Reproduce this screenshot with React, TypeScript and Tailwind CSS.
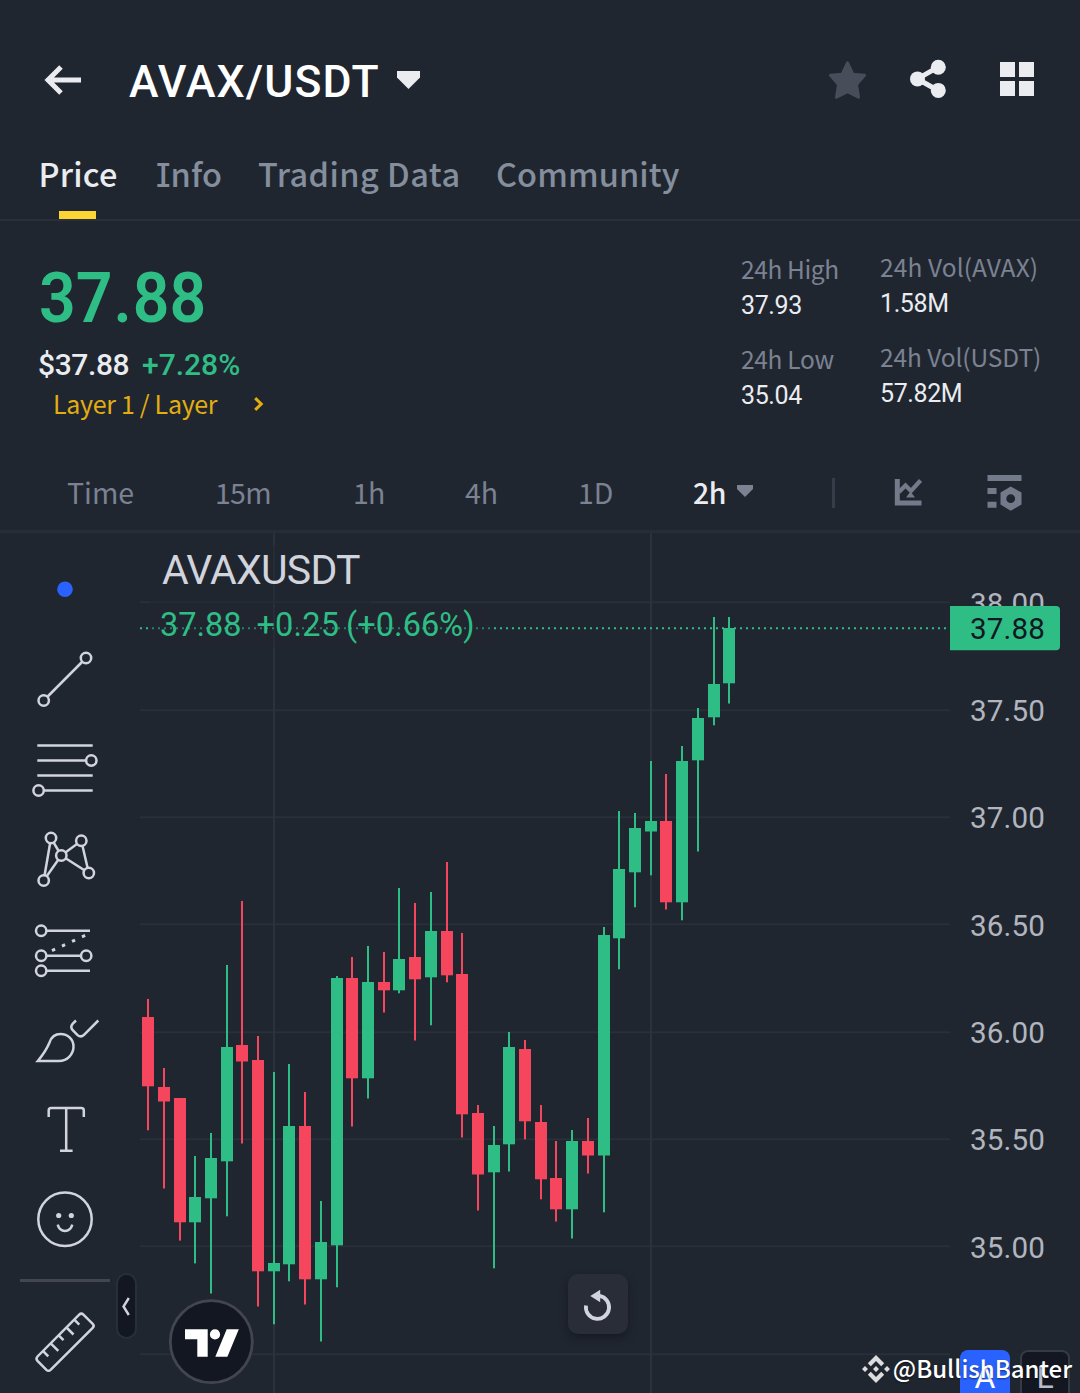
import React from "react";

const PLEX = "font-['Noto_Sans_CJK_SC','Noto_Sans',sans-serif]";
const ROBOTO = "font-[Roboto,sans-serif]";

type Candle = [x: number, open: number, close: number, high: number, low: number, up: 0 | 1];

/* x of the body's left edge, body top, body bottom, wick top, wick bottom, rising */
const CANDLES: Candle[] = [
  [142, 1017, 1086.3, 999, 1130.3, 0],
  [158, 1087, 1101.5, 1068, 1188.5, 0],
  [174, 1098, 1222.3, 1098, 1240.6, 0],
  [189, 1197, 1222.3, 1156, 1263.4, 1],
  [205, 1158, 1198.3, 1133, 1293.5, 1],
  [221, 1047, 1161.3, 965, 1216.3, 1],
  [236, 1045, 1061.5, 901, 1143.5, 0],
  [252, 1060, 1271.3, 1036, 1306.5, 0],
  [268, 1263, 1271.3, 1072, 1324.3, 1],
  [283, 1126, 1264.3, 1064, 1281.3, 1],
  [299, 1126, 1279.3, 1092, 1304.5, 0],
  [315, 1242, 1279.3, 1201, 1341.5, 1],
  [331, 978, 1245.3, 976, 1287.3, 1],
  [346, 978, 1078.3, 957, 1126.5, 0],
  [362, 982, 1078.3, 946, 1098.5, 1],
  [378, 982, 990.3, 952, 1012.5, 0],
  [393, 959, 990.3, 888, 993.3, 1],
  [409, 957, 979.3, 903, 1040.5, 0],
  [425, 931, 977.3, 892, 1025.3, 1],
  [441, 931, 975.3, 862, 982.3, 0],
  [456, 974, 1114.3, 933, 1137.5, 0],
  [472, 1113, 1174.5, 1105, 1210.5, 0],
  [488, 1145, 1172.3, 1126, 1268.3, 1],
  [503, 1047, 1144.3, 1032, 1171.5, 1],
  [519, 1049, 1121.3, 1040, 1139.3, 0],
  [535, 1122, 1179.3, 1105, 1199.3, 0],
  [550, 1178, 1209.3, 1141, 1221.5, 0],
  [566, 1141, 1209.3, 1130, 1238.5, 1],
  [582, 1141, 1155.5, 1118, 1173.5, 0],
  [598, 935, 1155.5, 927, 1212.3, 1],
  [613, 869, 938.3, 811, 969.3, 1],
  [629, 828, 872.3, 813, 907.3, 1],
  [645, 821, 831.5, 761, 875.3, 1],
  [660, 821, 902.3, 774, 909.5, 0],
  [676, 761, 902.3, 746, 920.3, 1],
  [692, 718, 760.3, 708, 851.5, 1],
  [708, 684, 717.3, 617, 725.3, 1],
  [723, 628, 683.3, 617, 703.5, 1],
];

const GRID_Y = [601.4, 709.4, 816.4, 923.4, 1031.4, 1138.4, 1245.4, 1353.4];

const AXIS: [string, number][] = [
  ["38.00", 613.6],
  ["37.50", 721.4],
  ["37.00", 828.4],
  ["36.50", 936.4],
  ["36.00", 1043.4],
  ["35.50", 1150.4],
  ["35.00", 1258.4],
];

function Header() {
  return (
    <header className="flex h-[160px] items-center pr-[46px] pl-[44px]">
      <svg className="mr-[48px] h-[30px] w-[37px] shrink-0" viewBox="0 0 37 30" fill="none" stroke="#eaecef" strokeWidth="5">
        <path d="M37 15H5M17 2L4 15L17 28" />
      </svg>
      <h1 className={`${ROBOTO} w-[250px] pt-[3px] text-[44.5px] leading-[60px] font-medium tracking-[1.1px] whitespace-nowrap text-white`}>
        AVAX/USDT
      </h1>
      <svg className="ml-[18px] h-[18px] w-[23px] shrink-0" viewBox="0 0 23 18" fill="#eaecef">
        <path d="M0 0H23V6.5L11.5 18L0 6.5Z" />
      </svg>
      <div className="ml-auto flex items-center pb-[2px]">
        <svg className="h-[40px] w-[38px]" viewBox="-0.5 -1 38 40" fill="#474d59" stroke="#474d59" strokeWidth="3" strokeLinejoin="round">
          <path d="M19 2.8L24.3 14.2L36 15.3L28 24.6L30 37.2L19 31.6L8 37.2L10 24.6L2 15.3L13.7 14.2Z" />
        </svg>
        <svg className="ml-[43px] h-[40px] w-[38px]" viewBox="909 59.5 38 40" fill="#eaecef">
          <path d="M938 67.7L917.5 79.4L938 91" fill="none" stroke="#eaecef" strokeWidth="5" />
          <circle cx="917.5" cy="79.4" r="7.5" />
          <circle cx="938.3" cy="67.8" r="7.5" />
          <circle cx="938.3" cy="90.9" r="7.5" />
        </svg>
        <div className="ml-[53px] grid grid-cols-2 gap-[4px]">
          <i className="size-[15px] bg-[#eaecef]" />
          <i className="size-[15px] bg-[#eaecef]" />
          <i className="size-[15px] bg-[#eaecef]" />
          <i className="size-[15px] bg-[#eaecef]" />
        </div>
      </div>
    </header>
  );
}

function Tabs() {
  return (
    <nav className={`${PLEX} flex h-[61px] border-b-2 border-[#2a303a] text-[32.5px] leading-[26px] font-medium whitespace-nowrap text-[#848e9c]`}>
      <div className="ml-[38px] flex w-[79px] flex-col items-center text-[#eaecef]">
        <span className="pl-[1px] tracking-[0.2px]">Price</span>
        <i className="mt-[25px] h-[8px] w-[37px] shrink-0 bg-[#fcd535]" />
      </div>
      <span className="ml-[39px] w-[65px] tracking-[0.1px]">
        <span className="font-[Inter] text-[32px] [font-feature-settings:'cv08']">I</span>nfo
      </span>
      <span className="ml-[37px] w-[201px] tracking-[0.45px]">Trading Data</span>
      <span className="ml-[37px] tracking-[0.1px]">Community</span>
    </nav>
  );
}

function Stat({ label, value, tracking }: { label: string; value: string; tracking: string }) {
  return (
    <div className="h-[90px] whitespace-nowrap">
      <div className={`${PLEX} text-[24.5px] leading-[32px] text-[#7b8291] ${tracking}`}>{label}</div>
      <div className={`${ROBOTO} pt-[3px] text-[25px] leading-[36px] tracking-[-0.4px] text-[#eaecef]`}>{value}</div>
    </div>
  );
}

function Summary() {
  return (
    <section className="flex h-[229px] justify-between">
      <div className="pt-[42px] pl-[39px] whitespace-nowrap">
        <div className={`${ROBOTO} origin-left scale-x-[0.92] text-[70px] leading-[71px] font-semibold text-[#2ebd85]`}>
          37<span className="px-[1px]">.</span>88
        </div>
        <div className={`${ROBOTO} flex pt-[14px] text-[30px] leading-[34px] font-medium`}>
          <span className="-ml-px w-[104px] tracking-[-0.4px] text-[#eaecef]">$37.88</span>
          <span className="text-[#2ebd85]">+7.28%</span>
        </div>
        <div className="flex items-center pl-[14px]">
          <span className={`${PLEX} w-[201px] pb-[2px] text-[25px] leading-[43px] tracking-[-0.3px] text-[#e3ae10]`}>Layer 1 / Layer</span>
          <svg className="mb-[2px] h-[14px] w-[10px]" viewBox="0 0 10 14" fill="none" stroke="#e3ae10" strokeWidth="3">
            <path d="M1.2 1.2L7.2 7L1.2 12.8" />
          </svg>
        </div>
      </div>
      <div className="flex">
        <div className="w-[139px] pt-[32px]">
          <Stat label="24h High" value="37.93" tracking="tracking-[-0.4px]" />
          <Stat label="24h Low" value="35.04" tracking="tracking-[-0.3px]" />
        </div>
        <div className="w-[200px] pt-[30px]">
          <Stat label="24h Vol(AVAX)" value="1.58M" tracking="tracking-[0.1px]" />
          <Stat label="24h Vol(USDT)" value="57.82M" tracking="tracking-[-0.1px]" />
        </div>
      </div>
    </section>
  );
}

function Intervals() {
  return (
    <div className={`${PLEX} flex h-[83px] items-center border-b-3 border-[#272d37] pt-[5px] text-[28.5px] leading-[38px] whitespace-nowrap text-[#7b8291]`}>
      <span className="ml-[67px] w-[148px] pb-[1px]">Time</span>
      <span className="w-[138px] pb-[1px] tracking-[-0.7px]">15m</span>
      <span className="w-[112px] pb-[1px] tracking-[-0.7px]">1h</span>
      <span className="w-[113px] pb-[1px]">4h</span>
      <span className="w-[115px] pb-[1px]">1D</span>
      <span className="w-[44px] pb-[1px] font-medium tracking-[-0.5px] text-[#eaecef]">2h</span>
      <svg className="mb-[3px] h-[12px] w-[16px]" viewBox="0 0 16 12" fill="#7b8291">
        <path d="M0 0H16V4L8 12L0 4Z" />
      </svg>
      <i className="ml-[79px] h-[30px] w-[3px] bg-[#363c48]" />
      <svg className="ml-[59px] h-[28px] w-[28px]" viewBox="894 478.5 28 28" fill="none" stroke="#737a89" strokeWidth="5">
        <path d="M897.3 478V502.6H921.5" />
        <path d="M899 491.5L905.5 485L911 490.5L920.5 480" strokeWidth="4.2" />
        <path d="M906 497L910.5 491L915 497Z" fill="#737a89" stroke="none" />
      </svg>
      <svg className="ml-[64px] h-[37px] w-[36px]" viewBox="986.5 474 36 37" fill="#737a89">
        <path d="M988 475H1022V481H988ZM988 488H997V494H988ZM988 501.7H997V507.7H988Z" />
        <path fillRule="evenodd" d="M1011.2 486.5L1022 492.5V504.5L1011.2 510.8L1001 504.5V492.5ZM1011.2 494.3A4.4 4.4 0 1 0 1011.2 503.1A4.4 4.4 0 1 0 1011.2 494.3Z" />
      </svg>
    </div>
  );
}

function Tool({ top, height = 90, children }: { top: number; height?: number; children: React.ReactNode }) {
  return (
    <svg
      width="130"
      height={height}
      viewBox={`0 ${top} 130 ${height}`}
      className="block shrink-0"
      fill="none"
      stroke="#d1d4dc"
      strokeWidth="2.5"
    >
      {children}
    </svg>
  );
}

function Dots({ points, r = 5.2 }: { points: [number, number][]; r?: number }) {
  return (
    <>
      {points.map(([x, y]) => (
        <circle key={`${x}-${y}`} cx={x} cy={y} r={r} fill="#202630" />
      ))}
    </>
  );
}

function Toolbar() {
  return (
    <aside className="relative flex w-[140px] shrink-0 flex-col pt-[11px]">
      <Tool top={544}>
        <circle cx="65" cy="589.3" r="7.8" fill="#2962ff" stroke="none" />
      </Tool>
      <Tool top={634}>
        <path d="M43.7 700.5L86 658" />
        <Dots points={[[43.7, 700.5], [86, 658]]} />
      </Tool>
      <Tool top={724}>
        <path d="M37.3 745.5H92.7M37.3 760.5H90M37.3 775.5H92.7M40 790.5H92.7" />
        <Dots points={[[91.3, 760.5], [38.6, 790.5]]} />
      </Tool>
      <Tool top={814}>
        <path d="M51 838L43.7 880.5L61.3 855.5ZM61.3 855.5L81.3 840.8L88.8 873Z" />
        <Dots points={[[51, 838], [81.3, 840.8], [61.3, 855.5], [43.7, 880.5], [88.8, 873]]} />
      </Tool>
      <Tool top={904}>
        <path d="M41 930.7H90M41 955.7H86M41 970.7H90" />
        <path d="M52 950.6L87 934.6" strokeWidth="3" strokeDasharray="3.4 7.6" />
        <Dots points={[[41.2, 930.7], [41.2, 955.7], [86.2, 955.7], [41.2, 970.7]]} />
      </Tool>
      <Tool top={994}>
        <path d="M37.8 1061C44 1053.5 47.3 1048 49.5 1042.5C51.5 1036.5 55 1034 60.5 1034C68 1034 73.5 1039.5 73.5 1046.5C73.5 1054 67.5 1061 59 1061Z" />
        <path d="M76 1020.5L72.8 1023.6C71 1025.5 71 1028 72.5 1030L77.3 1034.8C79.5 1036.8 82 1036.8 84 1034.8L98.3 1020.5" />
      </Tool>
      <Tool top={1084}>
        <path d="M48.7 1117V1110.5Q48.7 1108 51.2 1108H81.3Q83.8 1108 83.8 1110.5V1117M66.2 1108V1150.8M60 1150.8H72.6" />
      </Tool>
      <Tool top={1174} height={95}>
        <circle cx="65" cy="1219.3" r="26.7" />
        <circle cx="58.7" cy="1215.5" r="2.6" fill="#d1d4dc" stroke="none" />
        <circle cx="71.3" cy="1215.5" r="2.6" fill="#d1d4dc" stroke="none" />
        <path d="M57.7 1224.6C60 1233 70 1233 72.3 1224.6" />
      </Tool>
      <i className="mt-[10px] ml-[20px] h-[3px] w-[90px] shrink-0 bg-[#434651]" />
      <Tool top={1282} height={111}>
        <path d="M79.2 1314.6Q81.3 1312.5 83.4 1314.6L92.7 1323.8Q94.7 1325.8 92.7 1327.8L50.6 1369.8Q48.5 1371.8 46.4 1369.8L37.5 1360.8Q35.5 1358.6 37.5 1356.5Z" />
        <path d="M43 1351L48.3 1356.3M50.7 1343.3L58.3 1350.9M58.7 1335.3L63.5 1340.1M66.5 1327.5L73.5 1334.5M74.3 1319.7L79.3 1324.7" />
      </Tool>
      <div className="absolute top-[740px] left-[116px] z-10 flex h-[66px] w-[21px] items-center justify-center rounded-full border-[2.5px] border-[#2a2e39] bg-[#131722] pr-[1px]">
        <svg className="h-[19px] w-[8px]" viewBox="0 0 8 19" fill="none" stroke="#d1d4dc" strokeWidth="2.4">
          <path d="M6.8 1L1.5 9.5L6.8 18" />
        </svg>
      </div>
    </aside>
  );
}

function Chart() {
  return (
    <div className={`${ROBOTO} relative h-[860px] w-[940px]`}>
      <svg className="block h-[860px] w-[940px]" viewBox="140 533 940 860">
        {GRID_Y.map((y) => (
          <rect key={y} x="140" y={y} width="810" height="1.8" fill="#2a303a" />
        ))}
        <rect x="273" y="533" width="2" height="860" fill="#2c323c" />
        <rect x="650" y="533" width="2" height="860" fill="#2c323c" />
        {CANDLES.map(([x, top, bottom, high, low, up]) => (
          <g key={x} fill={up ? "#2ebd85" : "#f6465d"}>
            <rect x={x + 5} y={high} width="2" height={low - high} />
            <rect x={x} y={top} width="12" height={bottom - top} />
          </g>
        ))}
        <path d="M140 628.3H948" stroke="#2ebd85" strokeWidth="2" strokeDasharray="2 4" />
        <rect x="150" y="545" width="221" height="60" fill="#202630" opacity="0.5" />
        <rect x="150" y="607" width="341" height="40" fill="#202630" opacity="0.4" />
        <text x="162" y="584.4" fontSize="41" fill="#d1d4dc" textLength="198.5" lengthAdjust="spacing">AVAXUSDT</text>
        <g fontSize="32.5" fill="#2ebd85">
          <text x="160" y="636.4" textLength="81.5">37.88</text>
          <text x="256.5" y="636.4" textLength="82.5">+0.25</text>
          <text x="346" y="636.4" textLength="128.5">(+0.66%)</text>
        </g>
        {AXIS.map(([label, y]) => (
          <text key={label} x="970" y={y} fontSize="29.6" fill="#b2b5be" textLength="75">{label}</text>
        ))}
        <path d="M950 606H1056Q1060 606 1060 610V646Q1060 650.3 1056 650.3H950Z" fill="#2ebd85" />
        <text x="970" y="639.4" fontSize="29.6" fill="#131722" textLength="75">37.88</text>
        <circle cx="211.3" cy="1341.7" r="41" fill="#131722" stroke="#434651" strokeWidth="2.8" />
        <g fill="#fff">
          <path d="M185 1329.3H207.7V1356.8H197.3V1339.3H185Z" />
          <circle cx="215" cy="1334.4" r="5.1" />
          <path d="M226.7 1329.3H238.8L227.4 1356.8H215.3Z" />
        </g>
      </svg>
      <button className="absolute top-[741px] left-[428px] flex size-[60px] items-center justify-center rounded-[10px] bg-[#282d38] shadow-[0_4px_8px_rgba(10,12,20,0.45)]">
        <svg className="size-[60px]" viewBox="568 1274 60 60" fill="none">
          <path d="M586 1305.5A11.6 11.6 0 1 0 599.5 1295.8" stroke="#d1d4dc" strokeWidth="3.8" />
          <path d="M590.3 1296L600.2 1289.8V1302.3Z" fill="#d1d4dc" />
        </svg>
      </button>
      <div className="absolute right-[10px] bottom-0 flex h-[43px] gap-[10px] overflow-hidden text-[32px] leading-[55px]">
        <div className="h-[60px] w-[50px] rounded-[8px] bg-[#2962ff] text-center text-white">A</div>
        <div className="h-[60px] w-[50px] rounded-[8px] border-2 border-[#363a45] bg-[#131722] text-center leading-[51px] text-[#b8bcc8]">L</div>
      </div>
      <div className="absolute right-[8px] bottom-[4px] flex h-[40px] items-center gap-[3px]">
        <svg className="h-[28px] w-[28px]" viewBox="0 0 28 28" fill="#dcdddf">
          <path d="M14 0L22.2 8.2L19.2 11.2L14 6L8.8 11.2L5.8 8.2Z" />
          <path d="M14 28L22.2 19.8L19.2 16.8L14 22L8.8 16.8L5.8 19.8Z" />
          <path d="M3 11L6 14L3 17L0 14ZM14 11L17 14L14 17L11 14ZM25 11L28 14L25 17L22 14Z" />
        </svg>
        <span className={`${PLEX} pb-[2px] text-[24px] leading-[40px] font-medium whitespace-nowrap text-white [text-shadow:0_1px_2px_rgba(0,0,0,0.5)]`}>
          @BullishBanter
        </span>
      </div>
    </div>
  );
}

export default function App() {
  return (
    <main className="h-[1393px] w-[1080px] overflow-hidden bg-[#202630]">
      <Header />
      <Tabs />
      <Summary />
      <Intervals />
      <div className="flex h-[860px]">
        <Toolbar />
        <Chart />
      </div>
    </main>
  );
}
